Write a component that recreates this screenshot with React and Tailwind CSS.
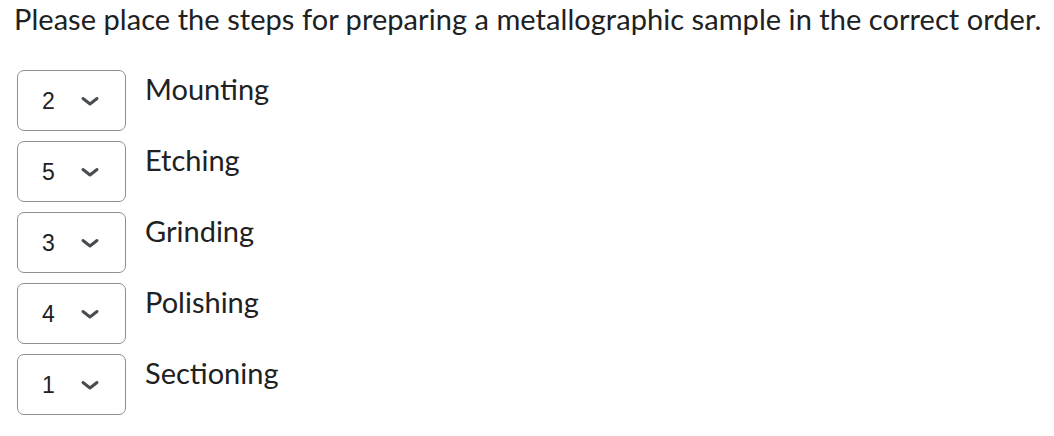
const steps = [
  { value: "2", label: "Mounting" },
  { value: "5", label: "Etching" },
  { value: "3", label: "Grinding" },
  { value: "4", label: "Polishing" },
  { value: "1", label: "Sectioning" },
];

function Chevron() {
  return (
    <svg width="20" height="12" viewBox="0 0 20 12" className="text-[#4a4d50]">
      <path d="M3 3.5 L10 9 L17 3.5" fill="none" stroke="currentColor" strokeWidth="3" strokeLinecap="round" strokeLinejoin="round" />
    </svg>
  );
}

export default function App() {
  return (
    <div className="bg-white w-[1054px] h-[436px] text-[#202122] font-['Lato','Noto_Sans',sans-serif]">
      <p className="pl-[14px] pt-[1px] text-[29px] leading-[36px] tracking-[0.05px]">
        Please place the steps for preparing a metallographic sample in the correct order.
      </p>
      <div className="mt-[33px] pl-[17px] flex flex-col gap-[10px]">
        {steps.map((s) => (
          <div key={s.label} className="flex items-start gap-[19px]">
            <div className="w-[109px] h-[61px] rounded-[7px] border border-[#8f8f8f] flex items-center pl-[24px] gap-[22px]">
              <span className="font-['Liberation_Sans',sans-serif] text-[23px] text-[#202122] w-[16px] mt-[2px]">{s.value}</span>
              <Chevron />
            </div>
            <span className="text-[29px] leading-[36px] mt-[1px]">{s.label}</span>
          </div>
        ))}
      </div>
    </div>
  );
}
